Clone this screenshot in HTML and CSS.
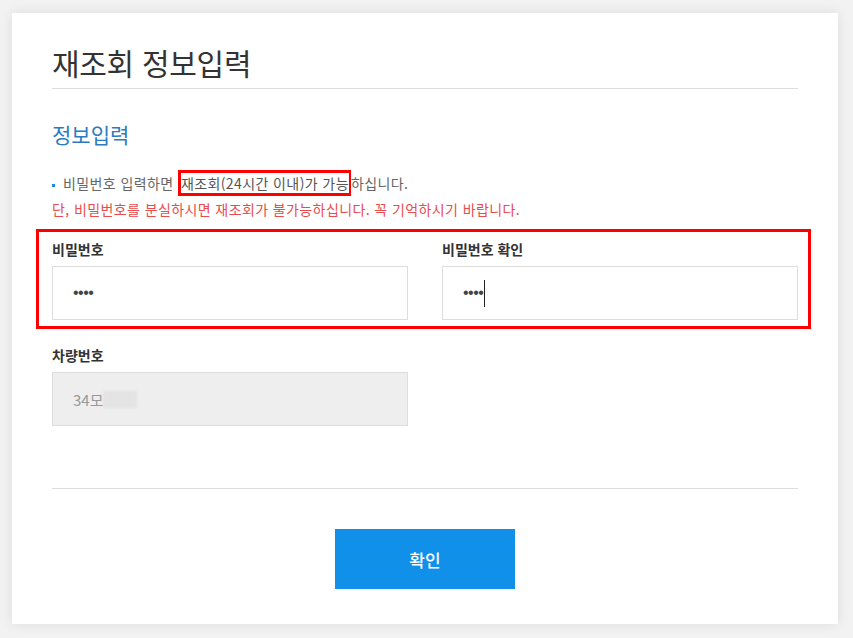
FILE: index.html
```html
<!DOCTYPE html>
<html lang="ko">
<head>
    <meta charset="UTF-8">
    <meta name="viewport" content="width=device-width, initial-scale=1.0">
    <title>재조회 정보입력</title>
    <link rel="stylesheet" href="styles.css">
</head>
<body>
    <div class="card">
        <!-- 제목 -->
        <h1 class="page-title">재조회 정보입력</h1>

        <h2 class="section-title">정보입력</h2>
        <p class="notice">비밀번호 입력하면 <span class="mark">재조회(24시간 이내)가 가능</span>하십니다.</p>
        <p class="warning">단, 비밀번호를 분실하시면 재조회가 불가능하십니다. 꼭 기억하시기 바랍니다.</p>

        <!-- 비밀번호 입력 -->
        <div class="pw-box">
            <div class="field">
                <label class="field-label">비밀번호</label>
                <div class="input"><span class="dots">••••</span></div>
            </div>
            <div class="field">
                <label class="field-label">비밀번호 확인</label>
                <div class="input"><span class="dots">••••</span><span class="caret"></span></div>
            </div>
        </div>

        <div class="field car-field">
            <label class="field-label">차량번호</label>
            <div class="input disabled">34모<span class="blur"></span></div>
        </div>

        <div class="actions">
            <button class="btn-confirm">확인</button>
        </div>
    </div>
</body>
</html>
```

FILE: styles.css
```css
/* 전체 */
body {
    margin: 0;
    padding: 13px 15px 14px 12px;
    background: #f2f2f2;
    font-family: "Noto Sans CJK KR", "Noto Sans", sans-serif;
    color: #333;
}

.card {
    background: #fff;
    width: 746px;
    height: 541px;
    padding: 29px 40px 41px 40px;
    box-shadow: 0 0 12px rgba(0, 0, 0, 0.09);
}

.page-title {
    margin: 0;
    font-size: 30px;
    font-weight: 400;
    line-height: 40px;
    color: #333;
    padding-bottom: 6px;
    border-bottom: 1px solid #ddd;
    letter-spacing: -0.3px;
}

.section-title {
    margin: 30px 0 0;
    font-size: 21px;
    font-weight: 400;
    line-height: 30px;
    color: #2a7cbf;
}

.notice {
    margin: 21px 0 0;
    font-size: 14px;
    line-height: 26px;
    color: #666;
    letter-spacing: 0.4px;
}

.notice::before {
    content: "";
    display: inline-block;
    width: 3px;
    height: 3px;
    background: #1e8be0;
    margin-right: 8px;
    vertical-align: middle;
}

.mark {
    border: 3px solid #f00;
    border-right-width: 2px;
    color: #555;
}

.warning {
    margin: 0;
    font-size: 14px;
    line-height: 26px;
    color: #e84c4c;
    letter-spacing: 0.4px;
}

/* 빨간 박스 */
.pw-box {
    display: grid;
    grid-template-columns: 356px 356px;
    column-gap: 34px;
    margin: 7px -13px 0 -16px;
    padding: 7px 10px 6px 13px;
    border: 3px solid #f00;
}

.field-label {
    display: block;
    font-size: 14px;
    font-weight: 700;
    line-height: 20px;
    color: #333;
    margin-bottom: 7px;
}

.input {
    height: 52px;
    border: 1px solid #ddd;
    padding-left: 20px;
    display: flex;
    align-items: center;
}

.dots {
    font-family: "Liberation Sans", sans-serif;
    font-size: 16px;
    color: #444;
    letter-spacing: -0.5px;
}

.caret {
    display: inline-block;
    width: 1px;
    height: 27px;
    background: #222;
    margin-left: 1px;
}

.car-field {
    width: 356px;
    margin-top: 16px;
}

.input.disabled {
    background: #eee;
    font-size: 15px;
    color: #999;
}

.blur {
    display: inline-block;
    width: 34px;
    height: 17px;
    background: #e4e4e4;
    filter: blur(1px);
}

.actions {
    margin-top: 62px;
    border-top: 1px solid #ddd;
    padding-top: 40px;
    text-align: center;
}

.btn-confirm {
    width: 180px;
    height: 60px;
    border: 0;
    background: #1190e9;
    color: #fff;
    font-family: inherit;
    font-size: 17px;
    font-weight: 500;
    cursor: pointer;
}
```
